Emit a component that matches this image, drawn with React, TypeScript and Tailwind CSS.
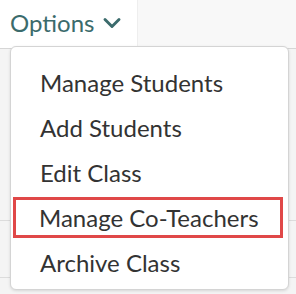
import { ChevronDown } from "lucide-react";

const items = ["Manage Students", "Add Students", "Edit Class", "Manage Co-Teachers", "Archive Class"];

export default function App() {
  return (
    <div className="relative w-[296px] h-[294px] overflow-hidden bg-[#f4f4f4] font-['Lato',sans-serif]">
      <div className="flex h-[48px]">
        <div className="w-[137px] bg-white flex items-start pt-[9px] pl-[10px] gap-[4px] text-[#3b6b6c]">
          <span className="text-[24px] leading-[28px]">Options</span>
          <ChevronDown size={28} strokeWidth={2.5} />
        </div>
        <div className="flex-1 bg-[#f8f8f8] border-l border-[#eeeeee]" />
      </div>
      <div className="border-t border-[#d6d6d6] h-[172px]" />
      <div className="border-t border-[#dcdcdc] h-[57px]" />
      <div className="border-t border-[#dcdcdc]" />

      <div className="absolute left-[10px] top-[46px] w-[279px] h-[244px] bg-white border border-[#d4d4d4] rounded-[6px] shadow-[0_1px_3px_rgba(0,0,0,0.12)] pt-[13px]">
        <ul className="flex flex-col">
          {items.map((t) =>
            t === "Manage Co-Teachers" ? (
              <li key={t} className="h-[45px] py-[2px] pl-[2px] pr-[5px]">
                <div className="h-[41px] flex items-center pl-[23px] text-[24px] text-[#333333] border-[3px] border-[#e04848]">
                  {t}
                </div>
              </li>
            ) : (
              <li key={t} className="h-[45px] flex items-center pl-[29px] text-[24px] text-[#333333]">
                {t}
              </li>
            )
          )}
        </ul>
      </div>
    </div>
  );
}
